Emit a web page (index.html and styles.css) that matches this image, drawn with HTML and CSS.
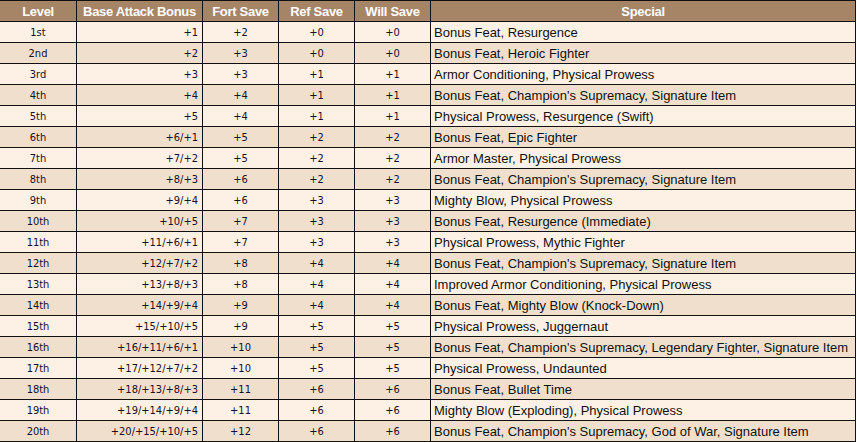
FILE: index.html
```html
<!DOCTYPE html>
<html>
<head>
<meta charset="utf-8">
<link rel="stylesheet" href="styles.css">
</head>
<body>
<table class="prog">
  <colgroup>
    <col class="c-level"><col class="c-bab"><col class="c-save"><col class="c-save"><col class="c-save"><col class="c-special">
  </colgroup>
  <thead>
    <tr><th>Level</th><th>Base Attack Bonus</th><th>Fort Save</th><th>Ref Save</th><th>Will Save</th><th>Special</th></tr>
  </thead>
  <tbody>
    <tr><td class="lvl">1st</td><td class="bab">+1</td><td class="sv">+2</td><td class="sv">+0</td><td class="sv">+0</td><td class="sp">Bonus Feat, Resurgence</td></tr>
    <tr><td class="lvl">2nd</td><td class="bab">+2</td><td class="sv">+3</td><td class="sv">+0</td><td class="sv">+0</td><td class="sp">Bonus Feat, Heroic Fighter</td></tr>
    <tr><td class="lvl">3rd</td><td class="bab">+3</td><td class="sv">+3</td><td class="sv">+1</td><td class="sv">+1</td><td class="sp">Armor Conditioning, Physical Prowess</td></tr>
    <tr><td class="lvl">4th</td><td class="bab">+4</td><td class="sv">+4</td><td class="sv">+1</td><td class="sv">+1</td><td class="sp">Bonus Feat, Champion's Supremacy, Signature Item</td></tr>
    <tr><td class="lvl">5th</td><td class="bab">+5</td><td class="sv">+4</td><td class="sv">+1</td><td class="sv">+1</td><td class="sp">Physical Prowess, Resurgence (Swift)</td></tr>
    <tr><td class="lvl">6th</td><td class="bab">+6/+1</td><td class="sv">+5</td><td class="sv">+2</td><td class="sv">+2</td><td class="sp">Bonus Feat, Epic Fighter</td></tr>
    <tr><td class="lvl">7th</td><td class="bab">+7/+2</td><td class="sv">+5</td><td class="sv">+2</td><td class="sv">+2</td><td class="sp">Armor Master, Physical Prowess</td></tr>
    <tr><td class="lvl">8th</td><td class="bab">+8/+3</td><td class="sv">+6</td><td class="sv">+2</td><td class="sv">+2</td><td class="sp">Bonus Feat, Champion's Supremacy, Signature Item</td></tr>
    <tr><td class="lvl">9th</td><td class="bab">+9/+4</td><td class="sv">+6</td><td class="sv">+3</td><td class="sv">+3</td><td class="sp">Mighty Blow, Physical Prowess</td></tr>
    <tr><td class="lvl">10th</td><td class="bab">+10/+5</td><td class="sv">+7</td><td class="sv">+3</td><td class="sv">+3</td><td class="sp">Bonus Feat, Resurgence (Immediate)</td></tr>
    <tr><td class="lvl">11th</td><td class="bab">+11/+6/+1</td><td class="sv">+7</td><td class="sv">+3</td><td class="sv">+3</td><td class="sp">Physical Prowess, Mythic Fighter</td></tr>
    <tr><td class="lvl">12th</td><td class="bab">+12/+7/+2</td><td class="sv">+8</td><td class="sv">+4</td><td class="sv">+4</td><td class="sp">Bonus Feat, Champion's Supremacy, Signature Item</td></tr>
    <tr><td class="lvl">13th</td><td class="bab">+13/+8/+3</td><td class="sv">+8</td><td class="sv">+4</td><td class="sv">+4</td><td class="sp">Improved Armor Conditioning, Physical Prowess</td></tr>
    <tr><td class="lvl">14th</td><td class="bab">+14/+9/+4</td><td class="sv">+9</td><td class="sv">+4</td><td class="sv">+4</td><td class="sp">Bonus Feat, Mighty Blow (Knock-Down)</td></tr>
    <tr><td class="lvl">15th</td><td class="bab">+15/+10/+5</td><td class="sv">+9</td><td class="sv">+5</td><td class="sv">+5</td><td class="sp">Physical Prowess, Juggernaut</td></tr>
    <tr><td class="lvl">16th</td><td class="bab">+16/+11/+6/+1</td><td class="sv">+10</td><td class="sv">+5</td><td class="sv">+5</td><td class="sp">Bonus Feat, Champion's Supremacy, Legendary Fighter, Signature Item</td></tr>
    <tr><td class="lvl">17th</td><td class="bab">+17/+12/+7/+2</td><td class="sv">+10</td><td class="sv">+5</td><td class="sv">+5</td><td class="sp">Physical Prowess, Undaunted</td></tr>
    <tr><td class="lvl">18th</td><td class="bab">+18/+13/+8/+3</td><td class="sv">+11</td><td class="sv">+6</td><td class="sv">+6</td><td class="sp">Bonus Feat, Bullet Time</td></tr>
    <tr><td class="lvl">19th</td><td class="bab">+19/+14/+9/+4</td><td class="sv">+11</td><td class="sv">+6</td><td class="sv">+6</td><td class="sp">Mighty Blow (Exploding), Physical Prowess</td></tr>
    <tr><td class="lvl">20th</td><td class="bab">+20/+15/+10/+5</td><td class="sv">+12</td><td class="sv">+6</td><td class="sv">+6</td><td class="sp">Bonus Feat, Champion's Supremacy, God of War, Signature Item</td></tr>
  </tbody>
</table>
</body>
</html>
```
FILE: styles.css
```css
html, body {
  margin: 0;
  padding: 0;
  background: #ffffff;
}
.prog {
  border-collapse: collapse;
  table-layout: fixed;
  width: 857px;
  margin-left: -1px;
  font-family: "Liberation Sans", Arial, sans-serif;
  color: #15102a;
}
.c-level { width: 77px; }
.c-bab { width: 126px; }
.c-save { width: 76px; }
.c-special { width: 425px; }
.prog th,
.prog td {
  border: 1px solid #111;
  height: 20px;
  padding: 0 3px;
  white-space: nowrap;
  overflow: hidden;
}
.prog th {
  background: #a68466;
  color: #ffffff;
  font-size: 13px;
  font-weight: bold;
  letter-spacing: -0.3px;
  text-align: center;
}
.prog tbody tr:nth-child(odd) td { background: #fdf0e4; }
.prog tbody tr:nth-child(even) td { background: #f0dfcd; }
.prog td {
  font-family: "DejaVu Sans Condensed", "DejaVu Sans", sans-serif;
  font-size: 11px;
}
.prog td.lvl, .prog td.sv { text-align: center; }
.prog td.bab { text-align: right; padding-right: 4px; }
.prog td.sp {
  text-align: left;
  font-family: "Liberation Sans", Arial, sans-serif;
  font-size: 13px;
  color: #111;
}
```
